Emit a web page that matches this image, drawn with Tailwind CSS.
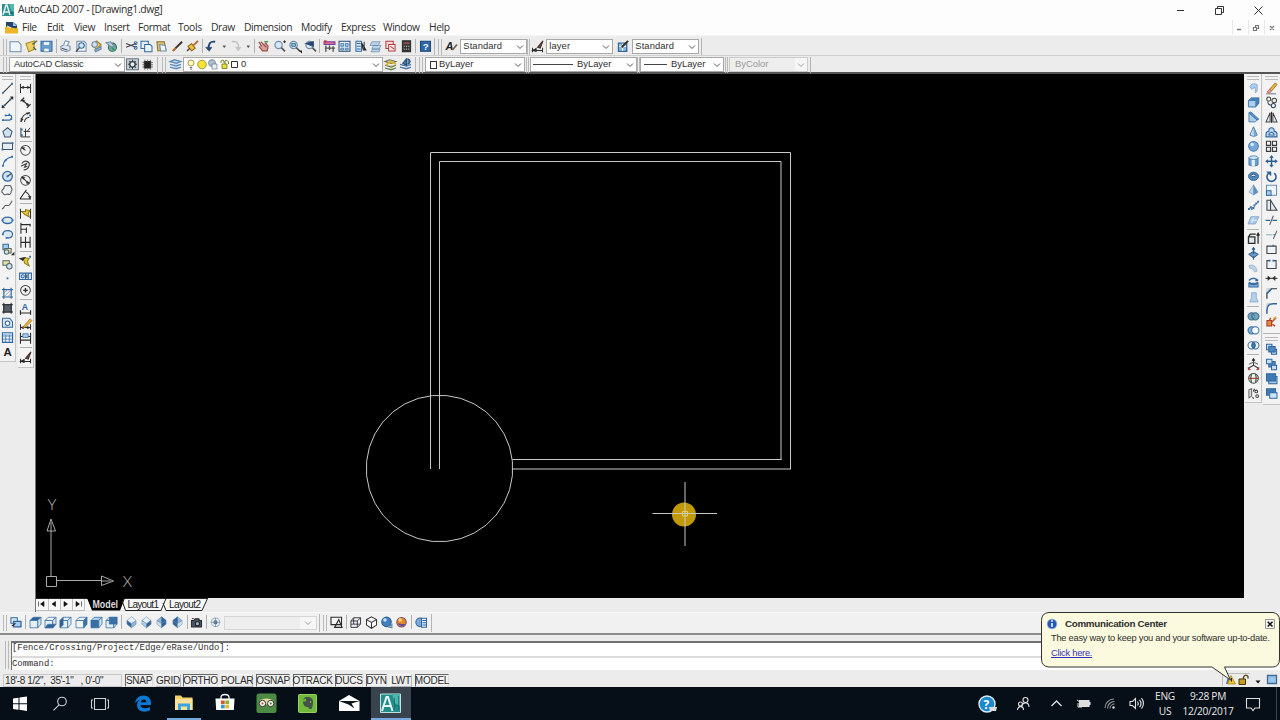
<!DOCTYPE html>
<html lang="en">
<head>
  <meta charset="UTF-8">
  <meta name="viewport" content="width=device-width, initial-scale=1.0">
  <title>AutoCAD 2007 - [Drawing1.dwg]</title>
  <script src="https://cdn.jsdelivr.net/npm/@tailwindcss/browser@4"></script>
</head>
<body class="w-[1280px] h-[720px] overflow-hidden relative flex flex-col bg-[#ececec] text-[#2e2e2e] font-['Liberation_Sans',sans-serif]">

  <svg class="hidden">
    <symbol id="chev" viewBox="0 0 8 6"><path d="M1 1.5l3 3 3-3" fill="none" stroke="#555" stroke-width="1"/></symbol>
  </svg>

  <!-- TITLE BAR -->
  <header class="h-[19px] shrink-0 flex items-center bg-[#fdfdfd] pl-[2px] font-['Open_Sans',sans-serif]">
    <svg class="w-3 h-3" viewBox="0 0 12 12"><path d="M0 0h12v12H0z" fill="#2c8f8d"/><path d="M7 0h5v8l-3-2z" fill="#56b5ae"/><path d="M1 11L4 1h1l3 10M2.500 8h4" fill="none" stroke="#dff3f1" stroke-width="1.500"/><path d="M8 9h3" stroke="#124e50"/></svg>
    <span class="ml-1 text-[10.400px] leading-none whitespace-nowrap tracking-[-0.350px]">AutoCAD 2007 - [Drawing1.dwg]</span>
    <svg class="ml-auto w-[110px] h-[18px]" viewBox="1170 0 110 18" fill="none" stroke="#333"><path d="M1177 9.500h7"/><path d="M1215.500 7.500h6v6h-6zM1217.500 7V5.500h6v6h-2M1254.500 5.500l8 8M1262.500 5.500l-8 8"/></svg>
  </header>

  <!-- MENU -->
  <nav class="h-4 shrink-0 flex items-center bg-[#fdfdfd] pl-[5px] text-[10.300px] tracking-[-0.380px] leading-none font-['Open_Sans',sans-serif]">
    <svg class="w-[13px] h-[13px] mr-1" viewBox="0 0 13 13"><path d="M1 1h7l4 3v8H1z" fill="#23456e"/><path d="M8 1l4 4H8z" fill="#9fc3e4"/><path d="M0 6c4-2 6 2 13 1v5.500H0z" fill="#f0b429"/><path d="M2 5l4 2" stroke="#fff6cf"/></svg>
    <a class="w-[25px]">File</a>
    <a class="w-[27px]">Edit</a>
    <a class="w-[30px]">View</a>
    <a class="w-[34px]">Insert</a>
    <a class="w-10">Format</a>
    <a class="w-[33px]">Tools</a>
    <a class="w-[33px]">Draw</a>
    <a class="w-[57px]">Dimension</a>
    <a class="w-10">Modify</a>
    <a class="w-[42px]">Express</a>
    <a class="w-[46px]">Window</a>
    <a>Help</a>
    <svg class="ml-auto w-12 h-4" viewBox="1232 19 48 16" fill="none" stroke="#777"><path d="M1232.500 20v14.500M1248.500 20v14.500M1264.500 20v14.500" stroke="#e8e8e8"/><path d="M1237 29.500h4" stroke-width="1.500"/><path d="M1253.500 27.500h3v3h-3zM1255.500 27v-1.500h3v3h-1.500M1270 26l4 4M1274 26l-4 4" stroke-width="1.200"/></svg>
  </nav>

  <!-- STANDARD + STYLES TOOLBARS -->
  <div class="h-5 shrink-0 flex items-center pl-[3px] pt-[2px] border-t border-[#f4f4f4]">
    <i class="w-1 h-4 border-x border-[#b9b9b9] mr-[1.3px]"></i>
    <div class="flex w-[426px]" data-bar="new open save | plot preview publish earth | cut copy paste match brush | undo . redo . | pan zoomrt zoomwin zoomprev | props dc palettes sheet markup calc | help"></div>
    <i class="w-px h-[18px] bg-[#b5b5b5] mr-[3px]"></i>
    <i class="w-1 h-4 border-x border-[#b9b9b9] mr-[2px]"></i>
    <div class="flex w-[16px]" data-bar="astyle"></div>
    <div class="w-[67px] h-[15px] flex items-center justify-between bg-white border border-[#a8a8a8] pl-[2px] pr-[2px] text-[9.400px] tracking-[0.1px]">Standard<svg class="w-2 h-1.5"><use href="#chev"/></svg></div>
    <i class="w-[3px] h-4 border-x border-[#b9b9b9]"></i>
    <div class="flex w-[16px]" data-bar="dimstyle"></div>
    <div class="w-[67px] h-[15px] flex items-center justify-between bg-white border border-[#a8a8a8] pl-[2px] pr-[2px] text-[9.400px] tracking-[0.1px]">layer<svg class="w-2 h-1.5"><use href="#chev"/></svg></div>
    <div class="flex w-[19px] pl-[3px]" data-bar="tabstyle"></div>
    <div class="w-[67px] h-[15px] flex items-center justify-between bg-white border border-[#a8a8a8] pl-[2px] pr-[2px] text-[9.400px] tracking-[0.1px]">Standard<svg class="w-2 h-1.5"><use href="#chev"/></svg></div>
    <i class="w-px h-[18px] bg-[#b5b5b5] ml-[2px]"></i>
  </div>

  <!-- LAYERS + PROPERTIES TOOLBARS -->
  <div class="h-[19px] shrink-0 flex items-center pl-[3px] pt-px border-t border-[#cfcfcf] text-[9.400px] border-b-2 border-b-[#555]">
    <i class="w-1 h-4 border-x border-[#b9b9b9] mr-[2px]"></i>
    <div class="w-[116px] h-[15px] flex items-center justify-between bg-white border border-[#a8a8a8] pl-1 pr-[2px] whitespace-nowrap tracking-[-0.150px]">AutoCAD Classic<svg class="w-2 h-1.5"><use href="#chev"/></svg></div>
    <div class="flex w-[32px]" data-bar="gear chip"></div>
    <i class="w-px h-4 bg-[#b5b5b5] mr-1"></i>
    <i class="w-1 h-4 border-x border-[#b9b9b9] mr-[2px]"></i>
    <div class="flex w-[15px]" data-bar="layers"></div>
    <div class="w-[200px] h-[15px] flex items-center bg-white border border-[#a8a8a8] pl-px pr-[2px]">
      <svg class="w-[56px] h-[13px]" viewBox="0 0 56 13"><circle cx="6" cy="5" r="3" fill="#fffbb0" stroke="#8c8440" stroke-width=".8"/><path d="M4.700 9.500h2.600M5 11h2" stroke="#777"/><circle cx="17" cy="6.500" r="4.300" fill="#f5e532" stroke="#7d8130" stroke-width=".8"/><circle cx="27" cy="5" r="3.500" fill="#aebfd0" stroke="#66788c" stroke-width=".7"/><path d="M27 6h5v5h-5z" fill="#e6eef5" stroke="#66788c" stroke-width=".7"/><path d="M36 5V3q2-2 3 0v2" fill="none" stroke="#777a20"/><path d="M37 6h5v4.500h-5z" fill="#e8e23a" stroke="#6d7020" stroke-width=".8"/><path d="M40 6V3q2-2 3.500 1v2" fill="none" stroke="#777a20"/><path d="M46.500 3.500h6v6h-6z" fill="#fff" stroke="#333"/></svg>
      0<svg class="w-2 h-1.5 ml-auto"><use href="#chev"/></svg></div>
    <div class="flex w-[32px]" data-bar="layprev layermgr"></div>
    <i class="w-px h-4 bg-[#b5b5b5] mr-[3px]"></i>
    <i class="w-1 h-4 border-x border-[#b9b9b9] mr-[2px]"></i>
    <div class="w-[100px] h-[15px] flex items-center bg-white border border-[#a8a8a8] pl-[4px] pr-[2px]"><i class="w-[7px] h-2 border border-[#333] mr-[2px]"></i>ByLayer<svg class="w-2 h-1.5 ml-auto"><use href="#chev"/></svg></div>
    <i class="w-[3px] h-4 border-x border-[#b9b9b9] mx-[1px]"></i>
    <div class="w-[107px] h-[15px] flex items-center bg-white border border-[#a8a8a8] pl-[2px] pr-[2px]"><i class="w-10 h-px bg-[#444] mr-[4px]"></i>ByLayer<svg class="w-2 h-1.5 ml-auto"><use href="#chev"/></svg></div>
    <i class="w-[3px] h-4 border-x border-[#b9b9b9]"></i>
    <div class="w-[84px] h-[15px] flex items-center bg-white border border-[#a8a8a8] pl-[3px] pr-[2px]"><i class="w-[23px] h-px bg-[#444] mr-[4px]"></i>ByLayer<svg class="w-2 h-1.5 ml-auto"><use href="#chev"/></svg></div>
    <i class="w-[3px] h-4 border-x border-[#b9b9b9] mx-[1px]"></i>
    <div class="w-[79px] h-[15px] flex items-center bg-[#eee] border border-[#ccc] pl-[5px] text-[#999]">ByColor<span class="ml-auto bg-white h-full w-3 flex items-center justify-center opacity-50"><svg class="w-2 h-1.5"><use href="#chev"/></svg></span></div>
    <i class="w-px h-4 bg-[#b5b5b5] ml-[2px]"></i>
  </div>

  <!-- WORK AREA -->
  <main class="h-[538px] shrink-0 flex">
    <aside class="w-[35px] flex items-start gap-[2px]">
      <div class="w-4 h-[288px] bg-[#f3f3f3] border-r border-b border-[#c4c4c4] pt-[2px]">
        <i class="block h-[4px] mx-[2px] mb-[0.7px] border-y border-[#b9b9b9]"></i>
        <div class="flex flex-col items-center" data-col="line xline pline polygon rect arc circle cloud spline ellipse ellarc insert block point hatch gradient region table mtext"></div>
      </div>
      <div class="w-4 h-[294px] bg-[#f3f3f3] border-r border-b border-[#c4c4c4] pt-[2px]">
        <i class="block h-[4px] mx-[2px] mb-[0.7px] border-y border-[#b9b9b9]"></i>
        <div class="flex flex-col items-center" data-col="dlin dalign darc dord | drad djog ddia dang | dquick dbase dcont | dlead dtol dcen | dedit dtedit dupd | dimstyle"></div>
      </div>
    </aside>

    <section class="w-[1209px] flex flex-col border-l border-[#777]">
      <svg class="w-[1208px] h-[524px] bg-black" viewBox="36 74 1208 524" fill="none" stroke="#c9c9c9" stroke-width="1">
        <path d="M430.500 469V152.500H790.500V469M439.500 469V161.500H781V460M781.500 459.500H512.500"/>
        <path d="M512 469H791"/>
        <polygon id="polyCircle"/>
        <circle cx="684" cy="514.500" r="12" fill="#c29a08" stroke="none"/>
        <path d="M652.500 513.500H717M685 482V546"/>
        <path d="M682.500 511.500h5v4.500h-5z" stroke="#e0cf78"/>
        <g stroke="#a8a8a8">
          <path d="M46.500 576.500h10v10h-10zM51 576V531M47 531l4-12 4.500 12zM51 531v-9M56.500 580.500H101.500M101.500 576v9.500l12-4.500zM101.500 581h9"/>
        </g>
        <g fill="#c4c4c4" stroke="none" class="font-['Lato',sans-serif] font-light text-[15px]">
          <text x="47.500" y="509.500">Y</text>
          <text x="122.800" y="586.500">X</text>
        </g>
      </svg>
      <svg class="w-[220px] h-[14px]" viewBox="36 598 220 14">
        <path d="M36 598h172l-5.500 12H36z" fill="#f7f7f7"/>
        <path d="M36 598.500h172" stroke="#222"/>
        <path d="M48.500 599v12M60.500 599v12M72.500 599v12M84.500 599v12M36 610.500h48" stroke="#c0c0c0"/>
        <path d="M38.500 601.500v5M44 601.500v5l-3.500-2.500zM55.500 601.500v5l-3.500-2.500zM64 601.500v5l3.500-2.500zM76 601.500v5l3.500-2.500zM81.500 601.500v5" fill="#111" stroke="#111" stroke-width=".6"/>
        <path d="M87 598h38l-5 12.500H92z" fill="#000"/>
        <path d="M124 598l-1.500 4 3 8.500h35.500l5-12M163 603l3 7.500h36l5.500-12" fill="none" stroke="#222"/>
        <g class="text-[10px] font-['Liberation_Sans',sans-serif]" fill="#222">
          <text x="92.500" y="608" fill="#ddd" font-weight="bold" textLength="25.500" lengthAdjust="spacingAndGlyphs">Model</text>
          <text x="127.500" y="608" textLength="31.500">Layout1</text>
          <text x="169" y="608" textLength="32">Layout2</text>
        </g>
      </svg>
    </section>

    <aside class="w-9 flex items-start gap-px pl-px">
      <div class="w-[17px] h-[329px] bg-[#f3f3f3] border-r border-b border-[#c4c4c4] pt-[2px]">
        <i class="block h-[4px] mx-[2px] mb-[0.7px] border-y border-[#b9b9b9]"></i>
        <div class="flex flex-col items-center" data-col="polysolid box wedge cone sphere cylinder torus pyramid helix planar | extrude presspull sweep revolve loft | union subtract intersect | move3d rotate3d align3d"></div>
      </div>
      <div class="w-[17px] h-[331px] bg-[#f3f3f3] border-b border-[#c4c4c4] pt-[2px]">
        <i class="block h-[4px] mx-[2px] mb-[0.7px] border-y border-[#b9b9b9]"></i>
        <div class="flex flex-col items-center" data-col="erase copyobj mirror offset array move rotate scale stretch trim extend breakpt break join chamfer fillet explode"></div>
        <i class="block h-px mt-[3.300px] bg-[#b5b5b5]"></i>
        <i class="block h-[4px] mx-[2px] mt-[3px] mb-[1px] border-y border-[#b9b9b9]"></i>
        <div class="flex flex-col items-center" data-col="front back above under"></div>
      </div>
    </aside>
  </main>

  <!-- VIEW TOOLBAR -->
  <div class="h-[21px] shrink-0 flex items-center pl-[3px] pb-px bg-[#f1f1f1] border-t border-[#f8f8f8]">
    <i class="w-1 h-4 border-x border-[#b9b9b9] mr-[1.3px]"></i>
    <div class="flex w-[215.700px]" data-bar="views | vtop vbottom vleft vright vfront vback | isw ise ine inw | camera | target"></div>
    <div class="w-[93px] h-[14px] flex items-center justify-end bg-[#eee] border border-[#d5d5d5]"><span class="bg-white h-full w-4 flex items-center justify-center opacity-50"><svg class="w-2 h-1.5"><use href="#chev"/></svg></span></div>
    <i class="w-px h-[18px] bg-[#b5b5b5] ml-[2px] mr-[3px]"></i>
    <i class="w-1 h-4 border-x border-[#b9b9b9] mr-[2px]"></i>
    <div class="flex w-[102px]" data-bar="vs2d | vs3dw vs3dh vsreal vsconc | vsmgr"></div>
    <i class="w-px h-[18px] bg-[#b5b5b5]"></i>
  </div>

  <!-- COMMAND LINE -->
  <div class="h-[38px] shrink-0 flex bg-[#ececec] border-t-2 border-[#8c8c8c] pt-[6px] pl-[5px]">
    <i class="w-1 h-[28px] border-x border-[#b9b9b9] mr-[2px]"></i>
    <div class="grow h-[29px] flex flex-col bg-white border-t-2 border-l border-[#707070] font-['Liberation_Mono',monospace] text-[8.870px]">
      <p class="h-[15px] leading-[11px] border-b-2 border-[#dcdcdc]">[Fence/Crossing/Project/Edge/eRase/Undo]:</p>
      <p class="h-3 leading-[13px]">Command:</p>
    </div>
  </div>

  <!-- STATUS BAR -->
  <div class="h-4 shrink-0 flex items-center pl-[3px] pt-[2px] text-[10px] leading-[12px]" id="status">
    <div class="w-[119px] h-[13px] border border-[#c8c8c8] pl-px tracking-[-0.400px] mr-[3px] whitespace-pre">18'-8 1/2",  35'-1"   , 0'-0"</div>
  </div>

  <!-- TASKBAR -->
  <footer class="h-[33px] shrink-0 bg-[#060e17] flex relative text-[#e8e8e8] font-['Open_Sans',sans-serif]">
    <svg class="w-[420px] h-[33px]" viewBox="0 687 420 33">
      <path d="M371 687h40v33h-40z" fill="#38434d"/><path d="M167 718h34v2h-34zM371 718h40v2h-40z" fill="#76a9de"/>
      <path d="M13 698.600l5.500-.8v5.500H13zM19.500 697.600l7.500-1.100v6.800h-7.500zM13 704.200h5.500v5.500l-5.500-.8zM19.500 704.200H27v6.700l-7.500-1.100z" fill="#fff"/>
      <g fill="none" stroke="#cfd3d6" stroke-width="1.100"><circle cx="62" cy="701.500" r="4.300"/><path d="M59 704.800l-5.500 5.500M94.500 698.500h11v11h-11zM93 700h-1.500v8H93M107 700h1.500v8H107"/></g>
      <path d="M135 703.500c.5-5 4-8 8.500-8 4.800 0 7.500 3.300 7.500 7.500v2h-10.500c.2 3.500 5.500 4.300 9.500 2v3.300c-6 3-13 1-13-5.300 0-2.500 1.300-4.200 3-5.200-2.300.6-4 2-5 3.700zm5.800-1.300h5.600c0-3.800-5-3.700-5.600 0z" fill="#0b78d4"/>
      <path d="M175 695.500h6l1.500 2h10V710H175z" fill="#f2cf69"/><path d="M175 699h17.500v11H175z" fill="#fbe29a"/><path d="M178 710v-6.500h12v6.500h-3v-3.500h-6v3.500z" fill="#3ca4dd"/>
      <path d="M215.500 698.500h19l-.7 11.500h-17.600z" fill="#fff"/><path d="M221 699v-1.500q0-3 4-3t4 3v1.500" fill="none" stroke="#fff" stroke-width="1.300"/>
      <path d="M221 700.500h3.700v3.600H221z" fill="#e5512b"/><path d="M225.400 700.500h3.700v3.600h-3.700z" fill="#7fb52f"/><path d="M221 704.800h3.700v3.600H221z" fill="#2a9fdc"/><path d="M225.400 704.800h3.700v3.600h-3.700z" fill="#f2b61f"/>
      <rect x="256.500" y="693.500" width="20" height="19.500" rx="2.500" fill="#4d8b44"/><path d="M259.500 700.500q7-4 14 0l-7 4z" fill="#e5d9a4"/><circle cx="262.500" cy="703.500" r="3.200" fill="#f6f2e6" stroke="#222" stroke-width=".9"/><circle cx="270.700" cy="703.500" r="3.200" fill="#f6f2e6" stroke="#222" stroke-width=".9"/><circle cx="262.500" cy="703.500" r="1" fill="#a44"/><circle cx="270.700" cy="703.500" r="1" fill="#363"/>
      <rect x="298.500" y="694.500" width="18" height="18" rx="1" fill="#70b93b" stroke="#95d15d"/><path d="M302.500 700l3-3c5-.5 7.500 1 7.500 5 0 4-.8 6.500-2 7-1.700.3-3-.5-2.500-2h-1.500c-2.500 0-4-3-4-5.500h3v-3z" fill="#44524a"/><circle cx="310.500" cy="702" r=".8" fill="#9fcf76"/>
      <path d="M339 701l10-6 10.500 6v10H339z" fill="#fff"/><path d="M339 701h20.500l-8 2.500 3 5-6-4z" fill="#0a121b"/>
      <path d="M380.500 694h20v18.500h-20z" fill="#238d8a" stroke="#bfe3df"/><path d="M392 694h8v12l-5-3z" fill="#4eb4ac"/><path d="M382 711l4.500-14h1.500l4.500 14M383.500 706h7" fill="none" stroke="#e6f7f5" stroke-width="2"/><path d="M394 706h5M394.500 698v12M398.500 696v14" stroke="#196868" stroke-width=".7"/>
    </svg>
    <svg class="w-[176px] h-[33px] ml-auto" viewBox="972 687 176 33" fill="none" stroke="#e0e0e0" stroke-width="1.100">
      <circle cx="987" cy="704" r="8" fill="#1c88cf" stroke="#dcebf5" stroke-width="1.400"/><text x="983.600" y="708.500" fill="#fff" stroke="none" font-size="12" font-weight="bold">?</text><path d="M989 707h8l-1 4h-6z" fill="#ddd" stroke="none"/>
      <circle cx="1025.500" cy="700" r="2.500"/><path d="M1021.500 707c1-5.500 7.500-5.500 7.500 0"/><circle cx="1020.500" cy="704" r="2"/><path d="M1017.500 710c.5-4.500 6-4.500 6 0"/>
      <path d="M1051.500 706l5-5 5 5" stroke-width="1.300"/>
      <path d="M1079.500 700.500h9.500v6h-9.500zM1090 702v3" fill="#ddd"/><path d="M1077 700l3 2M1078 703v4h4" stroke-width="1"/>
      <path d="M1105 708c0-5 4-9 9-9M1107.500 708.500c0-4 3-7 7-7M1110 708.500c0-2.500 2-4.500 4.500-4.500" stroke="#999"/><circle cx="1113.500" cy="707.500" r="1.200" fill="#ddd" stroke="none"/>
      <path d="M1130 701.500h2.500l3-3v10l-3-3h-2.500zM1137.500 701.500q1.500 2 0 4M1139.500 699.800q3 3.700 0 7.400M1141.500 698.200q4 5.300 0 10.500"/>
    </svg>
    <div class="w-[34px] pt-[2px] text-[10.200px] leading-[15px] text-center tracking-[-0.300px]">ENG<br>US</div>
    <div class="w-[52px] pt-[2px] text-[10.200px] leading-[15px] text-center whitespace-nowrap tracking-[-0.300px]">9:28 PM<br>12/20/2017</div>
    <svg class="w-[46px] h-[33px]" viewBox="1234 687 46 33" fill="none" stroke="#ddd" stroke-width="1.100"><path d="M1246.500 698.500h13v9.500h-4.500l-2 2.500-2-2.500h-4.500z"/><path d="M1276.500 687v33" stroke="#38424b"/></svg>
  </footer>

  <!-- COMMUNICATION CENTER BALLOON -->
  <svg class="absolute left-[1220px] top-[672px] w-[60px] h-[15px]" viewBox="1220 672 60 15">
    <path d="M1222.500 686v-12.500H1250" fill="none" stroke="#bbb"/>
    <path d="M1228 676l4 5-3 3h-3z" fill="#4f7ba8"/><path d="M1231 675.500l4.500 8.500h-8z" fill="#f0c832" stroke="#9b7b14" stroke-width=".7"/><path d="M1231.500 678v3.500" stroke="#222"/>
    <path d="M1239 679h6.500v5.500H1239z" fill="#c99b1d" stroke="#4d3c0b"/><path d="M1243.500 679v-2q2-3.500 4.500-.5v2" fill="none" stroke="#4d3c0b" stroke-width="1.300"/>
    <path d="M1255.500 680.500h5l-2.500 3z" fill="#111"/><path d="M1267.500 675.500h9v8h-9z" fill="#9dc7ea" stroke="#3f6b94" stroke-width="1.300"/>
  </svg>
  <div class="absolute left-[1040px] top-[612px] w-[240px] h-[72px] whitespace-nowrap">
    <svg class="absolute inset-0 w-[240px] h-[72px]" viewBox="1040 612 240 72">
      <path d="M1049 612.500H1273q6.500 1 6.500 8V659q0 8-7 8H1224.500L1230.500 680 1212 667H1049q-7.500-.5-7.500-8V620.500q0-7.500 7.500-8z" fill="#fbfade" stroke="#333"/>
      <circle cx="1052" cy="624" r="4.800" fill="#2458bd" stroke="#8aa6d4" stroke-width=".8"/><path d="M1052 623v4" stroke="#fff" stroke-width="1.500"/><circle cx="1052" cy="621" r=".9" fill="#fff"/>
      <path d="M1265.500 619.500h9v9h-9z" fill="#f4f4ec" stroke="#999"/><path d="M1267.700 621.700l4.800 4.800M1272.500 621.700l-4.800 4.800" stroke="#111" stroke-width="1.500"/>
    </svg>
    <div class="relative pl-[11px] pt-[5px] text-[9.300px] leading-[15px] tracking-[-0.250px]">
      <p class="pl-[14px] font-bold text-[9.800px] leading-[14px] tracking-[-0.300px]">Communication Center</p>
      <p>The easy way to keep you and your software up-to-date.</p>
      <a class="underline text-[#3434b8]">Click here.</a>
    </div>
  </div>

  <script>
    // shorthand for the repeated shapes, all icons live on a 16x16 grid
    const P = (d, s = '#333', f = 'none', w = 1.1) => `<path d="${d}" stroke="${s}" fill="${f}" stroke-width="${w}"/>`;
    const C = (x, y, r, s = '#333', f = 'none', w = 1.1) => `<circle cx="${x}" cy="${y}" r="${r}" stroke="${s}" fill="${f}" stroke-width="${w}"/>`;
    const D = (...pts) => pts.map(p => `<path d="M${p[0] - 1} ${p[1] - 1}h2v2h-2z" fill="#3a6fa8"/>`).join('');
    const B = '#32689f', L = '#a9cdec', G = '#6f8ba8', K = '#2b2b2b', Y = '#e2b12c';
    const cube = (t, l, r) => P('M2 6l3.500-3.500H14L10.500 6z', B, t, .8) + P('M2 6h8.500v8H2z', B, l, .8) + P('M10.500 6L14 2.500V10l-3.500 4z', B, r, .8);
    const iso = (t, l, r) => P('M8 2l5 4-5 3.500L3 6z', G, t, .6) + P('M3 6l5 3.500V14l-5-4z', G, l, .6) + P('M13 6L8 9.500V14l5-4z', G, r, .6);
    const lens = C(7, 6.500, 4, G, '#d9e8f5', 1.3) + P('M10 9.500l4 4', '#555', 'none', 1.8);
    const dimBase = P('M2.500 8v6M13.500 8v6M3 11.500h10', K) + P('M3 11.500l3-1.500v3zM13 11.500l-3-1.500v3z', K, K, .4);
    const pencil = P('M6 10l7-8 2 2-7 7-3 1z', '#8a6516', '#e6b53a', .7);

    const icons = {
      new: P('M2 3h9l3 3v8H2z', G, '#eef5fb'),
      open: P('M2 5l9-3v9l-6 3z', '#a8861d', '#efd05c') + P('M9 6l5-4M10 9l3 3', '#465', 'none', 1.4),
      save: P('M2 2.500h12v11H2z', B, '#6aa2d6') + P('M4.500 3h7v4h-7zM5 10h6v4H5z', B, '#f1f6fa', .6),
      plot: P('M3 8l4-2 6 2v4l-4 2-6-2z', G, '#dde6ee') + P('M6 6l2-4 4 1-2 4', G, '#fff') + P('M4 10l6 2', '#556'),
      preview: P('M3 2.500h8l2 2v9H3z', G, '#edf4fa') + C(8, 7, 3, B, '#d2e5f5') + P('M5.500 9.500L2 14', '#555', 'none', 1.6),
      publish: P('M3 7l5-5 5 4-5 5z', '#9b7a17', '#f0cb4c') + C(6, 6, 3, G, '#cfe1f0') + P('M6 12l7-4v3l-6 3z', G, '#87b0d4'),
      earth: C(9, 9, 4.500, '#386a55', '#6fa9a4') + P('M2 4l5-1 4 5-3 1z', G, '#b9cfe2') + P('M8 9l3 3', '#296', 'none', 1.6),
      cut: P('M2 5l11 4M2 9l11-4', '#444') + C(12.500, 4.500, 1.600, B) + C(12.500, 9.500, 1.600, B),
      copy: P('M2 2.500h8v8H2z', B, '#e4eff8') + P('M6 6h6l2 2v6H6z', B, '#e9f3fb'),
      paste: P('M3 3h8l2 9-9 1z', '#8a7329', '#d9c178') + P('M6 6l6 1 1 6H7z', G, '#eef5fb'),
      match: P('M3 13l3-3 7-7', '#3c342c', 'none', 2.200) + P('M3 13l3-3', '#c8752e', 'none', 2),
      brush: P('M3 8l4-3 4 5-4 3z', '#8a6516', '#f0c23c') + P('M9 7l5-5', '#c1632e', 'none', 2) + P('M2 13l3-3', '#444', 'none', 1.500),
      undo: P('M12 3C7 2 4 5 5 12', '#27476e', 'none', 2) + P('M1.500 9h7L5.500 13.500z', '#27476e', '#27476e', .5),
      redo: P('M4 3c6-1 8 2 7 9', '#c2c2c2', 'none', 1.600) + P('M8 9h6l-3 4z', '#c2c2c2', '#c2c2c2', .5),
      '.': P('M3 7.500h3l-1.500 2z', '#555', '#555', .5),
      pan: P('M3 3l3 5M5 3l6 6M3 8l4 5h5l1-5-3-4', '#a0524e', '#d8a3a0', 1.400) + P('M9 3h4', '#393', 'none', 1.500),
      zoomrt: lens + P('M12 3h3M13.500 1.500v3', K, 'none', 1),
      zoomwin: lens + P('M5 5h4v3H5z', B, '#9cc', 1) + P('M14 13h2v2z', K, K),
      zoomprev: lens + P('M3 5l8 3V3z', '#27476e', '#27476e'),
      props: P('M2 3h12v3H2z', '#7d3fa0', '#d06a90') + P('M4 7v7M8 7v5M12 8v6M3 10h11', '#555', 'none', 1.500) + P('M2 2.500h3', '#c33', 'none', 2),
      dc: P('M2 2.500h12v11H2z', '#2d4d70', '#dfeaf4') + P('M4 5h3v3H4zM9 5h3v3H9zM4 10h3v2H4zM9 10h3v2H9z', B, L, .8),
      palettes: P('M3 2.500h6v11H3z', B, '#dcebf7') + P('M4 5h4M4 8h4M4 11h4', B) + P('M9 4l5 8h-3zM12 3v9', K, '#87a'),
      sheet: P('M4 3h9l-2 4H2zM6 7h8l-2 4H4zM5 11h8l-1 3H3z', G, '#b9d5ec', .8),
      markup: P('M3 2.500h8v8H3z', '#b33c3c', '#f8d7d7') + P('M6 6h7v7H6z', '#b33c3c', '#fbeaea') + P('M8 8l4 3', '#b33c3c'),
      calc: P('M3.500 2h9v12h-9z', K, '#3a3a3a') + P('M5 4.500h6', '#a55', 'none', 1.500) + P('M5 8h6M5 11h6', '#aaa', 'none', 1.300) + P('M6.700 7v6M9.300 7v6', K),
      help: P('M2.500 2.500h11v11h-11z', '#1d4577', '#2d65a6') + '<text x="5" y="12" font-size="10.500" font-weight="bold" fill="#fff">?</text>',
      astyle: '<text x="1.500" y="12" font-size="12" font-style="italic" font-weight="bold" fill="#222">A</text>' + P('M9 12l5-6', '#7a5a3a', 'none', 1.800),
      dimstyle: P('M2 12.500h12M2.500 9.500v5M13.500 9.500v5', K) + P('M2.500 12.500l4-2v3z', K, K) + P('M8 9l6-7-3 8z', '#3c2d25', '#6b4c3c'),
      tabstyle: P('M2.500 4.500h9v9h-9z', B, '#8ab8e0', 1.500) + P('M3 8h8M7 5v8', '#fff') + P('M6 9l7-7', '#3b2b20', 'none', 2),
      gear: P('M1.500 2h13v12h-13z', '#68747f', '#c3ccd4') + C(8, 8, 3, '#2f3b46', '#e8eef2', 1.500) + P('M8 3v2M8 11v2M3 8h2M11 8h2M4.500 4.500L6 6M10 10l1.500 1.500M11.500 4.500L10 6M4.500 11.500L6 10', '#2f3b46'),
      chip: P('M4.500 5h7v7h-7z', '#222', '#222') + P('M5 3v2M8 3v2M11 3v2M5 12v2M8 12v2M11 12v2M2.500 6h2M2.500 8.500h2M2.500 11h2M12 6h2M12 8.500h2M12 11h2', '#777'),
      layers: P('M2 5l5-2 7 2-5 2zM2 8l7 2 5-2M2 11l7 2 5-2', '#5d8ab8', '#b6d2ea', 1.300),
      layprev: P('M2 5l5-2 7 2-5 2zM2 9l7 2 5-2M2 12l7 2 5-2', '#6d7a52', '#c5d3a2', 1.200) + P('M3 9l5-4 6 3', Y, 'none', 1.800),
      layermgr: P('M2 8l7 2 5-2M2 11l7 2 5-2', '#4b79a8', '#b6d2ea', 1.300) + P('M10 2c4 1 4 5 0 6M5 7l4-5v7z', '#27476e', '#4b79a8'),

      line: P('M3 13L13 3', K) + D([3, 13], [13, 3]),
      xline: P('M2 14L14 2', K, 'none', 1.300) + D([5, 11], [11, 5]) + P('M2 14v-3l3 3zM14 2v3l-3-3z', K, K, .4),
      pline: P('M3 11h7q4-1 2-5H6', B, 'none', 1.300) + D([3, 11], [12, 10], [6, 6], [10, 5]),
      polygon: P('M8 3l5 4-2 6H5L3 7z', '#3d556d', '#cfe0ee'),
      rect: P('M2.500 4.500h11v7h-11z', '#3d556d', '#e2edf6') + D([2.500, 11.500], [13.500, 4.500]),
      arc: P('M3 13Q4 5 13 3', B, 'none', 1.300) + D([3, 13], [6, 7], [13, 3]),
      circle: C(8, 8, 5.300, B, '#cfe0ee', 1.400) + P('M8 8l4-3', K) + D([8, 8]),
      cloud: P('M4 6q0-4 4-3 4-1 4 2 2 2 0 4 0 5-4 3-4 2-5-1-3-2 1-5z', '#555', '#edf2f6'),
      spline: P('M2 12c3-1 2-5 5-4s4-1 6-5', '#555'),
      ellipse: `<ellipse cx="8" cy="8" rx="5.500" ry="3.500" stroke="${B}" stroke-width="1.500" fill="#dbe9f5"/>` + D([2.500, 8], [13.500, 8]),
      ellarc: P('M3 8c0-6 11-5 10.500 0 0 4-4 4.500-7 3.500', B, '#dbe9f5', 1.300) + D([3, 8], [7, 12]),
      insert: P('M3 2.500h6v6H3z', B, L) + P('M5 7h7v5H5z', '#566', '#e9e2a4') + C(7, 11, 2.500, '#566', '#cfe0ee') + P('M13 14h2v-2z', K, K),
      block: P('M3 4h7v5H3z', '#566', '#e9e2a4') + C(10, 10, 3, '#566', '#cfe0ee'),
      point: D([8, 8]),
      hatch: P('M4 2v12M12 2v12M2 4h12M2 12h12', B, 'none', 1.300) + P('M4 8l4-4M4 12l8-8M8 12l4-4', G, 'none', .8),
      gradient: P('M4 2v12M12 2v12M2 4h12M2 12h12', K) + P('M4 4h8v8H4z', K, '#59626c'),
      region: P('M2.500 3.500h8l3 4v6h-11z', B, '#d6e6f3') + C(8, 9, 2.500, B, '#fff'),
      table: P('M2.500 3h11v10.500h-11z', B, '#e8f1f9', 1.300) + P('M2.500 6.500h11M2.500 10h11M6 3v10M10 3v10', B, 'none', .8) + P('M3 4.500h10', L, 'none', 2),
      mtext: '<text x="3.500" y="12.500" font-size="12.500" font-weight="bold" fill="#222">A</text>',

      dlin: P('M2.500 3v10M13.500 3v10M3 7h10', K) + P('M3 7l3-1.500v3zM13 7l-3-1.500v3z', K, K, .4),
      dalign: P('M4 5l8 7M2.500 7l4-4M9.500 14l4-4', K, 'none', 1.300) + P('M4 5l3.500 1-2 2zM12 12l-3.500-1 2-2z', K, K, .4),
      darc: P('M3 13Q4 4 13 3M7 13q0-4 5-5', K) + P('M3 13l0-4 2.500 1zM13 3l-4 0 1 2z', K, K, .4) + D([13, 6]),
      dord: P('M3 3v10h10M8 13V4M6 7h7M10 7l3-4', K, 'none', 1) + D([4, 5], [4, 11]) ,
      drad: C(8, 8, 5.300, '#444') + P('M8 8L4 5', K) + P('M4 5l3 0-1 2z', K, K, .4),
      djog: P('M4 6c3-5 9-2 8 2s-3 5-6 5M3 9l6-3-2 4 3-1', '#444', 'none', 1.300),
      ddia: C(8, 8, 5.300, '#444') + P('M4 4.500l8 7', K) + P('M4 4l3.500 1-2 2zM12 12l-3.500-1 2-2z', K, K, .4),
      dang: P('M2 13h12M2 13l7-10M8 5q5 3 5 8', K) + P('M13 13l-2-3h3z', K, K, .4),
      dquick: P('M2.500 3v11M13.500 3v11M3 6h10', K) + P('M8 4l5 1-2 3 1 4-5-3-3-3h4z', '#8f7815', '#e4c832'),
      dbase: P('M3 2v12M3 4h10M13 3v3M3 9h6M9 7v6', K, 'none', 1.200),
      dcont: P('M3 2v12M8 2v12M13 2v12M3 8h10', K, 'none', 1.200),
      dlead: P('M5 5l3-1 4 1-2 3 2 5-5-3-1-4z', '#8f7815', '#e4c832') + P('M2 5l5-1-2 3z', K, K) + D([13, 3]),
      dtol: P('M1.500 4.500h13v7h-13zM8 4.500v7M11 4.500v7', B, '#d5e6f5') + C(5, 8, 1.700, B) + P('M9.500 6v4', K),
      dcen: C(8, 8, 5.300, '#444') + P('M8 5.500v5M5.500 8h5', K, 'none', 1.500),
      dedit: '<text x="4" y="9" font-size="9.500" font-weight="bold" fill="#32689f">A</text>' + P('M2.500 9v5M13.500 9v5M3 12h10', K, 'none', 1.300),
      dtedit: dimBase + pencil,
      dupd: P('M2.500 2v12M13.500 2v12M3 10h10M3 6h10', K, 'none', 1.200) + P('M5 3h6v4H5z', B, L, .8),

      polysolid: P('M4 6q3-5 8-2v7l-2 2V7L6 9z', '#79a3cc', L, .8),
      box: P('M2.500 6l3-3H14v6l-3.500 4h-8z', B, '#4980b5', .7) + P('M2.500 6h8v7h-8z', B, L, .7),
      wedge: P('M3 3l9 8-2 2H3z', B, L, .8) + P('M3 3l2-1 9 8-2 1z', B, '#5d90c2', .7),
      cone: P('M8 2l4 9q-4 3-8 0z', B, '#c5def2', .8) + P('M8 2l4 9q-2 2-3 1z', B, '#7fa9d0', .3),
      sphere: C(8, 8, 5.300, '#477aad', '#79a9d6') + C(6.500, 6, 2, 'none', '#d4e7f7'),
      cylinder: P('M3 4v8q5 3 10 0V4z', B, '#6d9fcd', .8) + P('M6 4v10h3.500V5z', 'none', '#e2f0fb') + `<ellipse cx="8" cy="4" rx="5" ry="2" fill="#d4e7f7" stroke="${B}" stroke-width=".8"/>`,
      torus: `<ellipse cx="8" cy="8" rx="5.500" ry="4.500" fill="#5488bb" stroke="${B}"/><ellipse cx="8" cy="7" rx="2.500" ry="1.300" fill="#e4f0fa" stroke="#244c77"/>`,
      pyramid: P('M8 2l5 8-5 3z', G, '#5c8fc1', .6) + P('M8 2L3 10l5 3z', G, '#b9d7f0', .6),
      helix: D([3, 12], [5, 10], [8, 11], [9, 8], [11, 6], [13, 4], [6, 12]) + P('M2 12l4-2 2 1 2-4 4-3', B, 'none', .8),
      planar: P('M5 4h9l-4 8H2z', '#7d9fc2', '#a8c8e6', .8) + P('M5 8h7M8 5l-2 6', '#dcecf8'),
      extrude: P('M2.500 6.500h7v7h-7zM2.500 6.500l2-3h6M9.500 13.500V6.500', K, '#dfe8ef', 1.400) + P('M13 14V3M11.500 5L13 2.500 14.500 5', K, 'none', 1.400),
      presspull: P('M3 9l5-3 5 3-5 4z', '#345f8d', '#6c9ccb') + P('M8 9V2M6.500 4L8 2l1.500 2', '#345f8d', 'none', 1.500) + P('M8 11v4', '#345f8d'),
      sweep: P('M3 5c6-2 8 2 9 6l-3 1C8 9 7 8 4 8z', '#8ba9c6', '#bed6ea', .8),
      revolve: P('M3 9h10v4H3z', B, '#7fb1dc') + P('M3 6q5-5 10 0M13 6l-3 0M3 8c3 3 7 3 10 0', B, 'none', 1.700),
      loft: P('M6 3h5v5l2 5H4l2-5z', '#7d9fc2', '#b5d2ec', .8),
      union: C(6, 8, 4, '#3c6c88', '#6fa5bd') + C(10, 8, 4, '#3c6c88', '#6fa5bd') + P('M8 5q-2 3 0 6 2-3 0-6z', '#3c6c88', '#8fc0d4', .7),
      subtract: C(6, 8, 4, '#32689f', '#7fb0dc') + C(10, 8, 4, '#32689f', '#f6fafd'),
      intersect: C(6, 8, 4, '#32689f', '#f6fafd') + C(10, 8, 4, '#32689f') + P('M8 4.800q-3 3.200 0 6.400 3-3.200 0-6.400z', B, '#3f7ab4'),
      move3d: P('M8 9V2M8 9l-5 3M8 9l5 3', '#444', 'none', 1.200) + P('M2 11v3h3zM14 11v3h-3z', '#a33', '#a33', .4) + P('M6.500 4L8 2l1.500 2', K, K) + P('M3 8q5-4 10 0', '#666'),
      rotate3d: C(8, 8, 5.300, '#444') + P('M3 8h10', '#c33', 'none', 1.300) + P('M6 3q-2 5 0 10M10 3q2 5 0 10', '#39603f'),
      align3d: P('M3 4l3-1v8l-3 2z', '#666', '#ddd') + P('M9 3l-1 3M7 12l1 2', K) + C(11, 6, 1.500, '#444') + C(12, 11, 1.500, '#444'),

      erase: P('M6 9l6-7 2 2-6 7z', '#8a6516', '#e6b53a', .8) + P('M3 12l3-3 2 2-2 2z', '#a55', '#e6a0a0', .8) + P('M2 14h11', '#777'),
      copyobj: C(5, 4.500, 2.200, '#444') + C(11, 6, 2.500, '#444') + C(10, 11.500, 2.300, '#27476e') + P('M4 7q0 4 4 4', '#444'),
      mirror: P('M6.500 3v10H2zM9.500 3v10H14z', '#444', '#dfeaf4') + P('M8 2v12', K),
      offset: P('M2 13h12v-3q0-3-3-3 0-4-3-4T5 7q-3 0-3 3z', B, '#bcd7ee', 1.200) + P('M5 11h6q0-2-3-3-3 1-3 3z', B, '#f2f7fb'),
      array: P('M2.500 2.500h4.500v4.500h-4.500zM9 2.500h4.500v4.500H9zM2.500 9h4.500v4.500h-4.500zM9 9h4.500v4.500H9z', '#3a3a3a', '#eef3f7', 1.200),
      move: P('M8 2.500v11M2.500 8h11', '#2d5f94', 'none', 1.600) + P('M8 1.500l2 2.500H6zM8 14.500l2-2.500H6zM1.500 8L4 6v4zM14.500 8L12 6v4z', '#2d5f94', '#2d5f94', .4),
      rotate: P('M5 4.500a5 5 0 1 0 6 0', '#2d5f94', 'none', 1.700) + P('M2.500 3h5v4.500z', '#2d5f94', '#2d5f94', .4),
      scale: P('M2.500 2.500h11v11h-11z', G, '#edf4fa') + P('M2.500 8.500h5v5h-5z', B, L),
      stretch: P('M3 2.500h4v11H3z', '#444', '#dfeaf4') + P('M7 2.500l7 11H7z', '#444', '#dfeaf4'),
      trim: P('M1.500 8h5M9 8h5', B, 'none', 1.400) + P('M10 3L6 13', '#555'),
      extend: P('M2 8.500h7', '#8bb', 'none', 1.200) + P('M10 8.500h2', B) + P('M14 4l-4 9', '#555'),
      breakpt: P('M3 4.500h10v8H3z', '#444', '#edf4fa', 1.200) + D([10, 4]),
      break: P('M6 4H3v8.500h10V4h-3', '#444', '#edf4fa', 1.200) + D([6, 4], [10, 4]),
      join: P('M1.500 8h13', K) + P('M7 8L4 5.500v5zM9 8l3-2.500v5z', K, K, .4),
      chamfer: P('M3 14V8l5-5h6', '#333', 'none', 1.300) + P('M3 8l5-5', B, 'none', 1.800) + P('M3 7V3h4', '#aaa', 'none', .7),
      fillet: P('M3 14v-4q0-7 7-7h4', B, 'none', 1.700) + P('M3 7V3h4', '#aaa', 'none', .7),
      explode: P('M3 6h5v6H3z', '#a3362b', '#e38b3c') + P('M8 8l5-5M8 10l4 2M6 6l1-3', '#c2552c', 'none', 1.700) + P('M10 4l3-2', Y, 'none', 1.500),
      front: P('M2.500 2.500h6v6h-6zM8 8h5.500v5.500H8z', B, '#bdd9f0') + P('M5 5h7v6H5z', B, '#4f86bb'),
      back: P('M5 5h7v6H5z', B, '#4f86bb') + P('M2.500 2.500h6v5h-6zM8 9h5.500v5H8z', B, '#c7dff3'),
      above: P('M5 6h9v8H5z', B, '#a4c8e6') + P('M2.500 3h10v8h-10z', B, '#3f7ab4'),
      under: P('M2.500 3h10v7h-10z', B, '#3f7ab4') + P('M6 7.500h8v6H6z', B, '#cfe3f5'),

      views: P('M3 3h7v6H3z', B, '#d8e8f5') + P('M6 7h8v6H6z', B, '#a9cdec', 1.400) + P('M4 12l4-3', K),
      vtop: cube('#2f6399', '#e3eff9', '#cfe0ee'), vbottom: cube('#eef5fb', '#e3eff9', '#dbe8f3') + P('M2 14l3-4h9l-3.500 4z', B, '#2f6399', .5),
      vleft: cube('#e3eff9', '#e3eff9', '#e3eff9') + P('M2 6l3.500-3.500V11L2 14z', B, '#2f6399', .5), vright: cube('#e3eff9', '#eef5fb', '#3f74aa'),
      vfront: cube('#a9cdec', '#3a6fa6', '#cfe0ee'), vback: cube('#e3eff9', '#e3eff9', '#cfe0ee') + P('M5.500 2.500H14V10H5.500z', B, '#3a6fa6', .5),
      isw: iso('#e6f1fa', '#2f6399', '#8fb6da'), ise: iso('#e6f1fa', '#a9cdec', '#2f6399'),
      ine: iso('#8fb6da', '#cfe0ee', '#2f6399') + P('M8 2l5 4-5 3z', B, '#2f6399', .4), inw: iso('#8fb6da', '#2f6399', '#cfe0ee') + P('M8 2L3 6l5 3z', B, '#2f6399', .4),
      camera: P('M2.500 6h3l1-2h4l1 2h2v7h-11z', K, '#4a5560') + C(9, 9.500, 2.300, '#222', '#8fb4d4') + P('M3 4h2', K),
      target: C(8, 8, 4.700, '#9ab3c6', '#e3eef5') + C(8, 8, 1.700, '#4d6b85', '#789') + P('M8 3v3M8 10v3M3 8h3M10 8h3', '#789', 'none', .8),
      vs2d: P('M2 2.500h11.500v8H2z', K, '#f7f7f7', 1.200) + P('M6 13.500L10.500 5l3.500 8.500z', K, 'none', 1.300),
      vs3dw: P('M3 6.500h7v7H3zM3 6.500l3-3.500h7.500v7L10 13.500M10 6.500L13.500 3M6 3v7H3M6 10h7', '#333', '#eef', 1),
      vs3dh: P('M8 2l5.500 3v6L8 14.500 2.500 11V5zM2.500 5L8 8l5.500-3M8 8v6', '#333', '#fbfbfb', 1.100),
      vsreal: C(8, 7.500, 5.200, '#2a5c92', '#3f7fc0') + C(6.300, 5.500, 2, 'none', '#c5e0f6') + P('M10 13l4-3v4z', G, '#9bb'),
      vsconc: C(8, 8, 5.200, '#7b4a6d', '#e58a2c') + P('M3.500 9q4 6 9 1-4 0-9-1z', 'none', '#5a49a0') + C(6.500, 5.500, 2, 'none', '#fbd66b'),
      vsmgr: C(6.500, 8, 4.700, B, '#79a9d6') + P('M8 3.500h5.500v10H8z', B, '#e3eff9') + P('M9 6h4M9 8.500h4M9 11h4', B)
    };
    const svg = n => `<svg viewBox="0 0 16 16" class="w-[15px] h-[14.667px]">${icons[n]}</svg>`;

    document.querySelectorAll('[data-bar]').forEach(el => {
      el.innerHTML = el.dataset.bar.split(' ').map(n => {
        if (n === '|') return '<span class="w-1 shrink-0 flex justify-center"><i class="w-px h-[14px] bg-[#b0b0b0]"></i></span>';
        if (n === '.') return `<span class="w-[8.700px] shrink-0 overflow-hidden">${svg(n)}</span>`;
        return `<span class="w-[15.350px] shrink-0">${svg(n)}</span>`;
      }).join('');
    });

    document.querySelectorAll('[data-col]').forEach(el => {
      el.innerHTML = el.dataset.col.split(' ').map(n =>
        n === '|' ? '<span class="h-1 w-3 flex items-center"><i class="h-px w-full bg-[#b0b0b0]"></i></span>'
                  : `<span class="h-[14.667px] shrink-0">${svg(n)}</span>`
      ).join('');
    });

    // the circle is displayed as a polyline with 32 segments
    const pts = [];
    for (let i = 0; i < 32; i++) {
      const a = (i + 0.5) * Math.PI / 16;
      pts.push((439.5 + 73.3 * Math.cos(a)).toFixed(1) + ',' + (468.5 + 73.3 * Math.sin(a)).toFixed(1));
    }
    document.getElementById('polyCircle').setAttribute('points', pts.join(' '));

    // label, width, gap after, pressed
    const modes = [['SNAP', 28, 2, 1], ['GRID', 26, 2, 0], ['ORTHO', 35, 3, 1], ['POLAR', 32, 3, 0], ['OSNAP', 34, 3, 1],
      ['OTRACK', 39, 3, 1], ['DUCS', 28, 3, 1], ['DYN', 21, 3, 1], ['LWT', 22, 3, 0], ['MODEL', 34, 0, 1]];
    document.getElementById('status').insertAdjacentHTML('beforeend', modes.map(([t, w, g, on]) =>
      `<div class="h-[13px] flex justify-center border tracking-[-0.250px] ${on ? 'border-t-[#666] border-l-[#666] border-r-[#ddd] border-b-[#ddd] bg-[#f1f1f1]' : 'border-t-[#f8f8f8] border-l-[#f8f8f8] border-r-[#b5b5b5] border-b-[#b5b5b5]'}" style="width:${w}px;margin-right:${g}px">${t}</div>`).join(''));
  </script>
</body>
</html>
